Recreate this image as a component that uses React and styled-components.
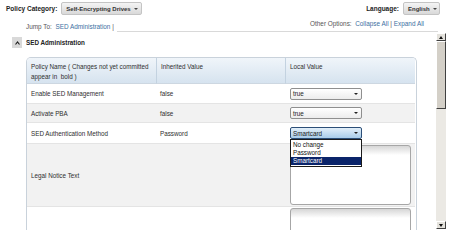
import styled, { createGlobalStyle } from "styled-components";

const GlobalStyle = createGlobalStyle`
    body {
        margin: 0;
        background: #ffffff;
        font-family: "Liberation Sans", Arial, sans-serif;
        font-size: 6.3px;
        color: #333333;
        white-space: nowrap;
    }
`;

const Page = styled.div`
    width: 450px;
    height: 245px;
    overflow: hidden;
    background: #ffffff;
`;

const TopBar = styled.div`
    display: flex;
    justify-content: space-between;
    align-items: center;
    height: 17px;
    padding: 0 10px 0 6px;
`;

const Field = styled.div`
    display: flex;
    align-items: center;
    gap: 4px;
`;

const Label = styled.span`
    font-weight: bold;
    font-size: 6.5px;
    color: #222222;
`;

const DropButton = styled.div`
    display: flex;
    align-items: center;
    justify-content: space-between;
    gap: 3px;
    box-sizing: border-box;
    width: ${(p) => p.$width}px;
    height: 13px;
    padding: 0 4px 0 4px;
    border: 1px solid #c4c4c4;
    border-radius: 2px;
    background: linear-gradient(#f4f4f4, #d9d9d9);
    font-weight: bold;
    font-size: 6px;
    color: #333333;
`;

const Caret = styled.span`
    flex: none;
    width: 0;
    height: 0;
    border-left: 2px solid transparent;
    border-right: 2px solid transparent;
    border-top: 2px solid ${(p) => p.$color || "#444444"};
`;

const JumpRow = styled.div`
    display: flex;
    align-items: flex-end;
    height: 15px;
`;

const JumpTo = styled.div`
    padding: 0 3px 2px 26px;
    color: #555555;
    font-size: 6.4px;
`;

const LinkText = styled.span`
    color: #3d6f9f;
`;

const OptionsRule = styled.div`
    flex: 1;
    display: flex;
    justify-content: flex-end;
    margin-right: 12px;
    border-bottom: 1px solid #d9d9d9;
    padding: 0 14px 4px 0;
`;

const Options = styled.div`
    color: #555555;
    font-size: 6.4px;
`;

const ScrollArea = styled.div`
    display: flex;
    height: 198px;
`;

const Content = styled.div`
    flex: 1;
    overflow: hidden;
    padding-top: 5px;
`;

const SectionHead = styled.div`
    display: flex;
    align-items: center;
    height: 11px;
    padding-left: 12px;
    gap: 4px;
`;

const ToggleBtn = styled.div`
    display: flex;
    align-items: center;
    justify-content: center;
    width: 10px;
    height: 11px;
    background: #d9d9d9;
`;

const SectionTitle = styled.span`
    font-weight: bold;
    font-size: 6.3px;
    color: #222222;
`;

const PolicyTable = styled.div`
    display: grid;
    grid-template-columns: 129px 129px 130px;
    width: 389px;
    margin: 9px 0 0 26px;
    border: 1px solid #c9d2db;
    border-bottom: none;
    border-radius: 5px 5px 0 0;
    overflow: hidden;
`;

const HeadCell = styled.div`
    height: 26px;
    box-sizing: border-box;
    padding: 4px 4px 0;
    line-height: 10px;
    background: linear-gradient(#f0f5fa, #d6e3ef);
    border-left: ${(p) => (p.$first ? "none" : "1px solid #c3d2e0")};
    border-bottom: 1px solid #cdd7e1;
    color: #2e2e2e;
`;

const Cell = styled.div`
    display: flex;
    align-items: center;
    box-sizing: border-box;
    height: ${(p) => p.$h}px;
    padding: 0 4px;
    background: ${(p) => (p.$alt ? "#f2f2f2" : "#ffffff")};
    border-bottom: 1px solid #e4e4e4;
    color: #2e2e2e;
`;

const ValueCell = styled(Cell)`
    position: relative;
    align-items: ${(p) => (p.$top ? "flex-start" : "center")};
    padding: ${(p) => (p.$top ? "1px 4px 0 5px" : "0 4px 0 5px")};
`;

const Select = styled.div`
    display: flex;
    align-items: center;
    justify-content: space-between;
    box-sizing: border-box;
    width: 72px;
    height: 12px;
    padding: 0 3px 0 2px;
    border: 1px solid ${(p) => (p.$focus ? "#2c4f78" : "#8f8f8f")};
    border-radius: 2px;
    background: ${(p) =>
        p.$focus
            ? "linear-gradient(#e3eff9, #a9cce9)"
            : "linear-gradient(#ffffff, #ececec)"};
    color: #222222;
    font-size: 6.3px;
`;

const OptionList = styled.div`
    position: absolute;
    left: 5px;
    top: 16px;
    z-index: 2;
    box-sizing: border-box;
    width: 72px;
    padding: 1px 0;
    border: 1px solid #1a1a1a;
    background: #ffffff;
`;

const Option = styled.div`
    height: 8px;
    line-height: 8px;
    padding: 0 2px;
    font-size: 6.3px;
    background: ${(p) => (p.$active ? "#0a246a" : "#ffffff")};
    color: ${(p) => (p.$active ? "#ffffff" : "#111111")};
`;

const TextBox = styled.div`
    box-sizing: border-box;
    width: 122px;
    height: ${(p) => p.$h}px;
    border: 1px solid #a6a6a6;
    border-radius: 3px;
    background: linear-gradient(#d6d6d6, #ffffff 9px);
`;

const ScrollBar = styled.div`
    display: flex;
    flex-direction: column;
    width: 10px;
    margin: 1px 4px 0 0;
    height: 196px;
    background: #ebe9e4;
`;

const ArrowBtn = styled.div`
    display: flex;
    align-items: center;
    justify-content: center;
    height: 8px;
    box-sizing: border-box;
    background: #e4e2dc;
    border: 1px solid;
    border-color: #ffffff #404040 #404040 #ffffff;
`;

const Thumb = styled.div`
    height: 68px;
    box-sizing: border-box;
    background: #d4d0c8;
    border: 1px solid;
    border-color: #ffffff #404040 #404040 #ffffff;
`;

const Track = styled.div`
    flex: 1;
`;

const UpArrow = styled.span`
    width: 0;
    height: 0;
    border-left: 2px solid transparent;
    border-right: 2px solid transparent;
    border-bottom: 3px solid #111111;
`;

const DownArrow = styled.span`
    width: 0;
    height: 0;
    border-left: 2px solid transparent;
    border-right: 2px solid transparent;
    border-top: 3px solid #111111;
`;

const rows = [
    { name: "Enable SED Management", inherited: "false", value: "true", h: 20 },
    { name: "Activate PBA", inherited: "false", value: "true", h: 19, alt: true },
    { name: "SED Authentication Method", inherited: "Password", value: "Smartcard", h: 21, open: true },
];

export default function App() {
    return (
        <Page>
            <GlobalStyle />
            <TopBar>
                <Field>
                    <Label>Policy Category:</Label>
                    <DropButton $width={81}>
                        Self-Encrypting Drives
                        <Caret />
                    </DropButton>
                </Field>
                <Field>
                    <Label>Language:</Label>
                    <DropButton $width={37}>
                        English
                        <Caret />
                    </DropButton>
                </Field>
            </TopBar>
            <JumpRow>
                <JumpTo>
                    Jump To:&nbsp; <LinkText>SED Administration</LinkText> |
                </JumpTo>
                <OptionsRule>
                    <Options>
                        Other Options:&nbsp; <LinkText>Collapse All</LinkText> |{" "}
                        <LinkText>Expand All</LinkText>
                    </Options>
                </OptionsRule>
            </JumpRow>
            <ScrollArea>
                <Content>
                    <SectionHead>
                        <ToggleBtn>
                            <svg width="5" height="4" viewBox="0 0 5 4">
                                <path d="M0.5 3.5 L2.5 1 L4.5 3.5" fill="none" stroke="#222" strokeWidth="1.2" />
                            </svg>
                        </ToggleBtn>
                        <SectionTitle>SED Administration</SectionTitle>
                    </SectionHead>
                    <PolicyTable>
                        <HeadCell $first>
                            Policy Name ( Changes not yet committed
                            <br />
                            appear in&nbsp; bold )
                        </HeadCell>
                        <HeadCell>Inherited Value</HeadCell>
                        <HeadCell>Local Value</HeadCell>
                        {rows.map((r) => [
                            <Cell key={r.name + "n"} $h={r.h} $alt={r.alt}>
                                {r.name}
                            </Cell>,
                            <Cell key={r.name + "i"} $h={r.h} $alt={r.alt}>
                                {r.inherited}
                            </Cell>,
                            <ValueCell key={r.name + "v"} $h={r.h} $alt={r.alt}>
                                <Select $focus={r.open}>
                                    {r.value}
                                    <Caret $color="#222222" />
                                </Select>
                                {r.open && (
                                    <OptionList>
                                        <Option>No change</Option>
                                        <Option>Password</Option>
                                        <Option $active>Smartcard</Option>
                                    </OptionList>
                                )}
                            </ValueCell>,
                        ])}
                        <Cell $h={63} $alt>
                            Legal Notice Text
                        </Cell>
                        <Cell $h={63} $alt />
                        <ValueCell $h={63} $alt $top>
                            <TextBox $h={60} />
                        </ValueCell>
                        <Cell $h={40} />
                        <Cell $h={40} />
                        <ValueCell $h={40} $top>
                            <TextBox $h={40} />
                        </ValueCell>
                    </PolicyTable>
                </Content>
                <ScrollBar>
                    <ArrowBtn>
                        <UpArrow />
                    </ArrowBtn>
                    <Thumb />
                    <Track />
                    <ArrowBtn>
                        <DownArrow />
                    </ArrowBtn>
                </ScrollBar>
            </ScrollArea>
        </Page>
    );
}
